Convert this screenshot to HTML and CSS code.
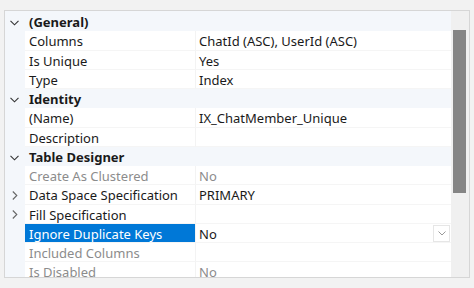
FILE: index.html
```html
<!DOCTYPE html>
<html>
<head>
<meta charset="utf-8">
<link rel="stylesheet" href="styles.css">
</head>
<body>
<div class="panel">
  <div class="grid">
    <div class="row cat"><span class="tog"><svg width="9" height="6" viewBox="0 0 9 6"><path d="M0.5 0.8 L4.5 4.8 L8.5 0.8" fill="none" stroke="#333" stroke-width="1.1"/></svg></span><span class="cname">(General)</span></div>
    <div class="row"><span class="tog"></span><span class="name">Columns</span><span class="val">ChatId (ASC), UserId (ASC)</span></div>
    <div class="row"><span class="tog"></span><span class="name">Is Unique</span><span class="val">Yes</span></div>
    <div class="row"><span class="tog"></span><span class="name">Type</span><span class="val">Index</span></div>
    <div class="row cat"><span class="tog"><svg width="9" height="6" viewBox="0 0 9 6"><path d="M0.5 0.8 L4.5 4.8 L8.5 0.8" fill="none" stroke="#333" stroke-width="1.1"/></svg></span><span class="cname">Identity</span></div>
    <div class="row"><span class="tog"></span><span class="name">(Name)</span><span class="val">IX_ChatMember_Unique</span></div>
    <div class="row"><span class="tog"></span><span class="name">Description</span><span class="val"></span></div>
    <div class="row cat"><span class="tog"><svg width="9" height="6" viewBox="0 0 9 6"><path d="M0.5 0.8 L4.5 4.8 L8.5 0.8" fill="none" stroke="#333" stroke-width="1.1"/></svg></span><span class="cname">Table Designer</span></div>
    <div class="row dim"><span class="tog"></span><span class="name">Create As Clustered</span><span class="val">No</span></div>
    <div class="row"><span class="tog"><svg width="6" height="9" viewBox="0 0 6 9"><path d="M0.8 0.5 L4.8 4.5 L0.8 8.5" fill="none" stroke="#666" stroke-width="1.1"/></svg></span><span class="name">Data Space Specification</span><span class="val">PRIMARY</span></div>
    <div class="row"><span class="tog"><svg width="6" height="9" viewBox="0 0 6 9"><path d="M0.8 0.5 L4.8 4.5 L0.8 8.5" fill="none" stroke="#666" stroke-width="1.1"/></svg></span><span class="name">Fill Specification</span><span class="val"></span></div>
    <div class="row sel"><span class="tog"></span><span class="name">Ignore Duplicate Keys</span><span class="val">No<span class="dd"><svg width="8" height="5" viewBox="0 0 8 5"><path d="M0.5 0.5 L4 4 L7.5 0.5" fill="none" stroke="#999" stroke-width="1"/></svg></span></span></div>
    <div class="row dim"><span class="tog"></span><span class="name">Included Columns</span><span class="val"></span></div>
    <div class="row dim"><span class="tog"></span><span class="name">Is Disabled</span><span class="val">No</span></div>
  </div>
  <div class="scroll"><div class="thumb"></div></div>
</div>
</body>
</html>
```
FILE: styles.css
```css
html, body {
  margin: 0;
  padding: 0;
}
body {
  background: #f2f2f2;
  width: 474px;
  height: 288px;
  overflow: hidden;
  font-family: "Noto Sans", "Open Sans", sans-serif;
  font-size: 13px;
  color: #1a1a1a;
}
.panel {
  margin: 10px 4px 0 4px;
  height: 266px;
  border: 1px solid #d6d6d6;
  display: flex;
  overflow: hidden;
  background: #f4f7fb;
}
.grid {
  width: 446px;
  flex: none;
  overflow: hidden;
  padding-top: 1px;
}
.row {
  display: grid;
  grid-template-columns: 20px 171px 1fr;
  height: 19.25px;
  line-height: 21px;
}
.tog {
  display: flex;
  align-items: center;
  padding-top: 1px;
}
.row.cat .tog {
  padding-left: 5px;
}
.row:not(.cat) .tog {
  padding-left: 7px;
}
.cname {
  grid-column: 2 / 4;
  font-weight: bold;
  padding-left: 4px;
}
.name, .val {
  background: #ffffff;
  border-bottom: 1px solid #f5f5f5;
  box-sizing: border-box;
  white-space: nowrap;
  overflow: hidden;
}
.name {
  padding-left: 4px;
  border-right: 1px solid #f3f3f3;
}
.val {
  padding-left: 3px;
  position: relative;
}
.dim .name, .dim .val {
  color: #8c8c8c;
}
.sel .name {
  background: #0078d7;
  color: #ffffff;
}
.dd {
  position: absolute;
  right: 1px;
  top: 1px;
  width: 17px;
  height: 17px;
  box-sizing: border-box;
  border: 1px solid #e6e6e6;
  background: #ffffff;
  display: flex;
  align-items: center;
  justify-content: center;
}
.scroll {
  flex: 1;
  background: #f0f0f0;
  padding-top: 19px;
}
.thumb {
  margin-left: 2px;
  width: 13px;
  height: 163px;
  background: #858585;
}
```
